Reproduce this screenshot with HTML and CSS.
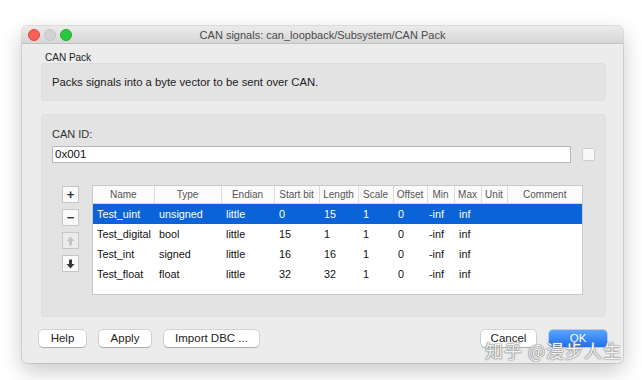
FILE: index.html
```html
<!DOCTYPE html>
<html lang="en">
<head>
  <meta charset="UTF-8">
  <title>CAN signals: can_loopback/Subsystem/CAN Pack</title>
  <link rel="stylesheet" href="styles.css">
</head>
<body>

  <div class="window">
    <div class="titlebar">
      <div class="lights">
        <span class="light red"></span>
        <span class="light gray"></span>
        <span class="light green"></span>
      </div>
      <div class="title">CAN signals: can_loopback/Subsystem/CAN Pack</div>
      <div></div>
    </div>

    <div class="content">
      <div class="block-name">CAN Pack</div>
      <div class="desc">Packs signals into a byte vector to be sent over CAN.</div>

      <div class="group">
        <div class="label">CAN ID:</div>
        <div class="id-row">
          <div class="id-input">0x001</div>
          <div class="checkbox"></div>
        </div>

        <div class="signals">
          <div class="side-buttons">
            <div class="small-btn">+</div>
            <div class="small-btn">&minus;</div>
            <div class="small-btn disabled">
              <svg width="9" height="10" viewBox="0 0 9 10"><path d="M4.5 0.5 L8.5 5 L6 5 L6 9.5 L3 9.5 L3 5 L0.5 5 Z" fill="#c4c4c4"/></svg>
            </div>
            <div class="small-btn">
              <svg width="9" height="10" viewBox="0 0 9 10"><path d="M4.5 9.5 L8.5 5 L6 5 L6 0.5 L3 0.5 L3 5 L0.5 5 Z" fill="#3a3a3a"/></svg>
            </div>
          </div>

          <div class="table-box">
            <table>
              <colgroup>
                <col style="width:61px"><col style="width:67px"><col style="width:53px"><col style="width:45px">
                <col style="width:39px"><col style="width:35px"><col style="width:34px"><col style="width:27px">
                <col style="width:27px"><col style="width:26px"><col style="width:75px">
              </colgroup>
              <thead>
                <tr>
                  <th>Name</th><th>Type</th><th>Endian</th><th>Start bit</th><th>Length</th><th>Scale</th>
                  <th>Offset</th><th>Min</th><th>Max</th><th>Unit</th><th>Comment</th>
                </tr>
              </thead>
              <tbody id="rows"></tbody>
            </table>
          </div>
        </div>
      </div>
    </div>

    <div class="footer">
      <div class="btn help">Help</div>
      <div class="btn apply">Apply</div>
      <div class="btn import">Import DBC ...</div>
      <div class="spacer"></div>
      <div class="btn cancel">Cancel</div>
      <div class="btn ok">OK</div>
    </div>
  </div>

  <div class="watermark">知乎 @漫步人生</div>

  <script>
    const rows = document.getElementById("rows");

    const signals = [
      ["Test_uint", "unsigned", "little", 0, 15],
      ["Test_digital", "bool", "little", 15, 1],
      ["Test_int", "signed", "little", 16, 16],
      ["Test_float", "float", "little", 32, 32]
    ];

    signals.forEach((s, index) => {
      const tr = document.createElement("tr");
      if (index === 0) tr.className = "selected";
      tr.innerHTML = `
        <td class="name">${s[0]}</td><td>${s[1]}</td><td>${s[2]}</td><td>${s[3]}</td><td>${s[4]}</td>
        <td>1</td><td>0</td><td class="tight">-inf</td><td>inf</td><td></td><td></td>
      `;
      rows.appendChild(tr);
    });
  </script>
</body>
</html>
```

FILE: styles.css
```css
body {
  margin: 0;
  width: 642px;
  height: 380px;
  overflow: hidden;
  background-color: #ffffff;
  font-family: 'Liberation Sans', Arial, sans-serif;
  color: #222;
  position: relative;
}

.window {
  margin: 26px 0 0 22px;
  width: 601px;
  height: 337px;
  background-color: #ececec;
  border-radius: 5px;
  overflow: hidden;
  box-shadow: 0 0 0 1px rgba(0, 0, 0, 0.1), 0 8px 22px rgba(0, 0, 0, 0.22);
}

.titlebar {
  height: 17px;
  display: grid;
  grid-template-columns: 1fr auto 1fr;
  align-items: center;
  background: linear-gradient(#ebebeb, #d6d6d6);
  border-bottom: 1px solid #c2c2c2;
}

.lights {
  display: flex;
  gap: 4px;
  padding-left: 6px;
}

.light {
  width: 12px;
  height: 12px;
  border-radius: 50%;
  box-sizing: border-box;
}

.light.red {
  background-color: #fc5f57;
  border: 1px solid #e0443e;
}

.light.gray {
  background-color: #d2d2d2;
  border: 1px solid #c2c2c2;
}

.light.green {
  background-color: #2ac840;
  border: 1px solid #1eaa33;
}

.title {
  font-size: 11px;
  color: #4a4a4a;
}

.content {
  padding: 0 18px 0 20px;
}

.block-name {
  font-size: 10px;
  line-height: 11px;
  margin-top: 8px;
  color: #222;
  padding-left: 3px;
}

.desc {
  margin-top: 1px;
  height: 36px;
  display: flex;
  align-items: center;
  padding-left: 10px;
  background-color: #e3e3e3;
  border-radius: 3px;
  box-shadow: 0 0 0 1px #dedede;
  font-size: 11.3px;
  color: #222;
}

.group {
  margin-top: 15px;
  height: 201px;
  box-sizing: border-box;
  padding: 13px 10px 0 10px;
  background-color: #e3e3e3;
  border-radius: 3px;
  box-shadow: 0 0 0 1px #dedede;
}

.label {
  font-size: 11px;
  line-height: 13px;
  color: #333;
}

.id-row {
  margin-top: 5px;
  display: flex;
  align-items: center;
}

.id-input {
  width: 519px;
  height: 17px;
  box-sizing: border-box;
  background-color: #fff;
  border: 1px solid #b8b8b8;
  font-size: 11.5px;
  line-height: 15px;
  padding-left: 2px;
  color: #111;
}

.checkbox {
  width: 11px;
  height: 11px;
  margin-left: 11px;
  background-color: #f9f9f9;
  border: 1px solid #cdcdcd;
  border-radius: 2px;
}

.signals {
  margin-top: 22px;
  display: flex;
  align-items: flex-start;
}

.side-buttons {
  margin-left: 10px;
  margin-top: 1px;
  display: flex;
  flex-direction: column;
  gap: 6px;
}

.small-btn {
  width: 17px;
  height: 17px;
  box-sizing: border-box;
  background-color: #fafafa;
  border: 1px solid #c6c6c6;
  display: flex;
  align-items: center;
  justify-content: center;
  font-size: 13px;
  font-weight: bold;
  color: #333;
  line-height: 1;
}

.small-btn.disabled {
  background-color: #ececec;
}

.table-box {
  margin-left: 13px;
  width: 491px;
  height: 110px;
  box-sizing: border-box;
  background-color: #fff;
  border: 1px solid #c9c9c9;
}

table {
  border-collapse: collapse;
  table-layout: fixed;
  width: 489px;
}

th {
  height: 17px;
  padding: 0;
  font-size: 10px;
  font-weight: normal;
  color: #555;
  text-align: center;
  background-color: #fbfbfb;
  border-bottom: 1px solid #d8d8d8;
  border-right: 1px solid #dcdcdc;
  white-space: nowrap;
  overflow: hidden;
}

th:last-child {
  border-right: none;
}

td {
  height: 20px;
  padding: 0 0 0 5px;
  font-size: 10.8px;
  color: #111;
  white-space: nowrap;
  overflow: hidden;
}

td.name {
  padding-left: 4px;
}

td.tight {
  padding-left: 2px;
}

tr.selected td {
  background-color: #0b63d8;
  color: #fff;
}

.footer {
  display: flex;
  margin-top: 14px;
  padding: 0 16px 0 17px;
  gap: 13px;
}

.spacer {
  flex: 1;
}

.btn {
  height: 17px;
  box-sizing: border-box;
  background-color: #fff;
  border-radius: 4px;
  box-shadow: 0 0 0 0.5px rgba(0, 0, 0, 0.22), 0 1px 1px rgba(0, 0, 0, 0.18);
  font-size: 11.5px;
  line-height: 17px;
  text-align: center;
  color: #222;
}

.help { width: 47px; }
.apply { width: 52px; }
.import { width: 95px; }
.cancel { width: 55px; }

.ok {
  width: 58px;
  color: #fff;
  background: linear-gradient(#5aa6fd, #1c6ff3);
  box-shadow: 0 0 0 0.5px rgba(0, 60, 200, 0.4);
}

.watermark {
  position: absolute;
  left: 485px;
  top: 339px;
  font-family: 'Noto Sans CJK SC', sans-serif;
  font-size: 18px;
  letter-spacing: 1px;
  line-height: 22px;
  color: rgba(255, 255, 255, 0.92);
  text-shadow: 0 0 1px #777, 0 0 1px #777, 0 0 2px #999;
}
```
